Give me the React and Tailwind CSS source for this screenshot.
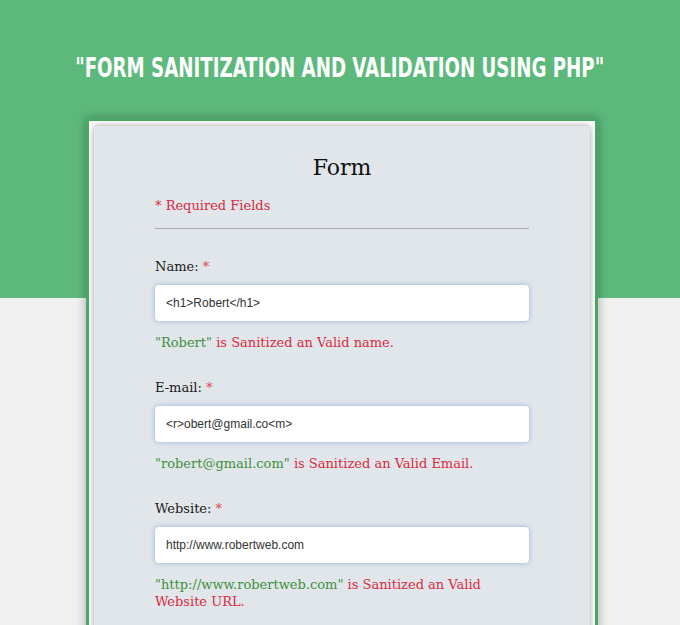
const fields = [
  {
    label: 'Name:',
    value: '<h1>Robert</h1>',
    clean: '"Robert"',
    rest: ' is Sanitized an Valid name.',
  },
  {
    label: 'E-mail:',
    value: '<r>obert@gmail.co<m>',
    clean: '"robert@gmail.com"',
    rest: ' is Sanitized an Valid Email.',
  },
  {
    label: 'Website:',
    value: 'http://www.robertweb.com',
    clean: '"http://www.robertweb.com"',
    rest: ' is Sanitized an Valid',
    rest2: 'Website URL.',
  },
];

const serif = 'font-["DejaVu_Serif","Liberation_Serif",serif]';

const Field = ({ field }) => (
  <div className="mb-[27px]">
    <div className={`${serif} text-[13px] leading-[20px] text-[#1a1a1a]`}>
      {field.label} <span className="text-[#e0404e]">*</span>
    </div>
    <div className="mt-[8px] h-[36px] rounded-[4px] bg-white shadow-[0_0_5px_rgba(120,160,220,0.75)] flex items-center px-[11px] font-['Liberation_Sans',Arial,sans-serif] text-[12px] text-[#333]">
      {field.value}
    </div>
    <div className={`${serif} mt-[13px] text-[13px] leading-[17px] text-[#d92b3e]`}>
      <span className="text-[#3f8f3f]">{field.clean}</span>
      {field.rest}
      {field.rest2 && (
        <>
          <br />
          {field.rest2}
        </>
      )}
    </div>
  </div>
);

export default function App() {
  return (
    <div className="h-[625px] overflow-hidden bg-[linear-gradient(to_bottom,#5cb97b_298px,#f0f0f0_298px)]">
      <div className="pt-[50px] flex justify-center">
        <h1 className="shrink-0 scale-x-[0.75] whitespace-nowrap text-white font-bold uppercase font-['DejaVu_Sans_Condensed','DejaVu_Sans',sans-serif] text-[27px] leading-[36px]">
          "Form Sanitization and Validation using PHP"
        </h1>
      </div>

      <div className="ml-[86px] mt-[32px] w-[512px] border-[3px] border-[#49a867] bg-white p-[5px] shadow-[0_0_10px_rgba(0,0,0,0.3)]">
        <div className="rounded-[4px] bg-[#e1e6ea] px-[61px] pt-[27px] pb-[40px] shadow-[0_0_6px_rgba(0,0,0,0.4)]">
          <h2 className={`${serif} text-center text-[22px] leading-[30px] text-[#111]`}>Form</h2>
          <p className={`${serif} mt-[13px] text-[13px] leading-[20px] text-[#d92b3e]`}>* Required Fields</p>
          <div className="mt-[12px] mb-[28px] h-[1px] bg-[#a9adb1]" />
          {fields.map((f) => (
            <Field key={f.label} field={f} />
          ))}
        </div>
      </div>
    </div>
  );
}
